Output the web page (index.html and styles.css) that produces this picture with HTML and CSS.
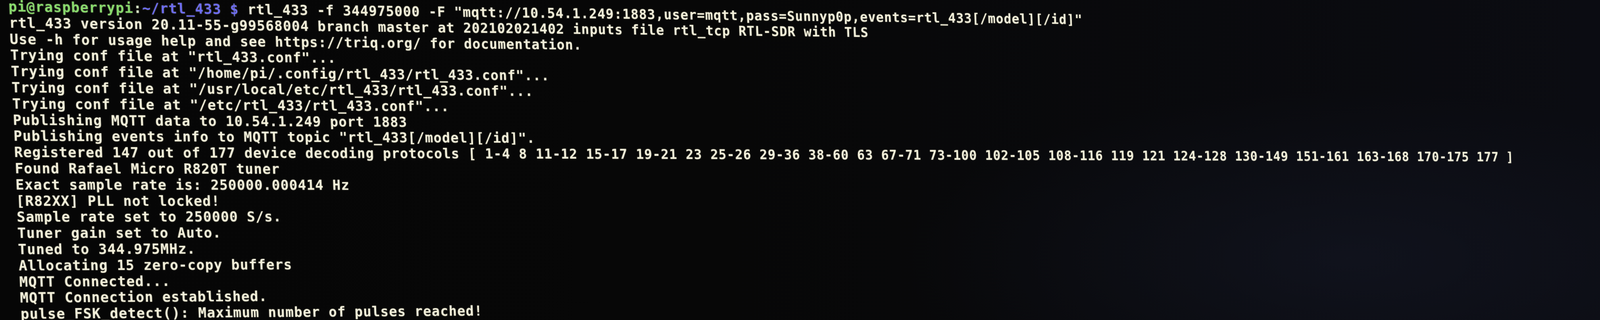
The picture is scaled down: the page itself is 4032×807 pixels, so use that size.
FILE: index.html
```html
<!DOCTYPE html>
<html lang="en">
<head>
<meta charset="utf-8">
<title>rtl_433 terminal</title>
<link rel="stylesheet" href="styles.css">
</head>
<body>
<main class="screen">
  <div class="term">
    <div class="line"><span class="user">pi@raspberrypi</span><span class="colon">:</span><span class="path">~/rtl_433 $</span> rtl_433 -f 344975000 -F "mqtt://10.54.1.249:1883,user=mqtt,pass=Sunnyp0p,events=rtl_433[/model][/id]"</div>
    <div class="line">rtl_433 version 20.11-55-g99568004 branch master at 202102021402 inputs file rtl_tcp RTL-SDR with TLS</div>
    <div class="line">Use -h for usage help and see https://triq.org/ for documentation.</div>
    <div class="line">Trying conf file at "rtl_433.conf"...</div>
    <div class="line">Trying conf file at "/home/pi/.config/rtl_433/rtl_433.conf"...</div>
    <div class="line">Trying conf file at "/usr/local/etc/rtl_433/rtl_433.conf"...</div>
    <div class="line">Trying conf file at "/etc/rtl_433/rtl_433.conf"...</div>
    <div class="line">Publishing MQTT data to 10.54.1.249 port 1883</div>
    <div class="line">Publishing events info to MQTT topic "rtl_433[/model][/id]".</div>
    <div class="line">Registered 147 out of 177 device decoding protocols [ 1-4 8 11-12 15-17 19-21 23 25-26 29-36 38-60 63 67-71 73-100 102-105 108-116 119 121 124-128 130-149 151-161 163-168 170-175 177 ]</div>
    <div class="line">Found Rafael Micro R820T tuner</div>
    <div class="line">Exact sample rate is: 250000.000414 Hz</div>
    <div class="line">[R82XX] PLL not locked!</div>
    <div class="line">Sample rate set to 250000 S/s.</div>
    <div class="line">Tuner gain set to Auto.</div>
    <div class="line">Tuned to 344.975MHz.</div>
    <div class="line">Allocating 15 zero-copy buffers</div>
    <div class="line">MQTT Connected...</div>
    <div class="line">MQTT Connection established.</div>
    <div class="line">pulse_FSK_detect(): Maximum number of pulses reached!</div>
  </div>
</main>
</body>
</html>
```

FILE: styles.css
```css
html, body {
  margin: 0;
  padding: 0;
  height: 100%;
  overflow: hidden;
}

body {
  background: #060606;
}

.screen {
  width: 4032px;
  height: 807px;
  background:
    radial-gradient(ellipse 1600px 600px at 3400px 650px, rgba(22, 26, 42, 0.5), rgba(0, 0, 0, 0) 70%),
    linear-gradient(90deg, #060606 0%, #070707 45%, #0b0c12 100%);
  overflow: hidden;
}

.term {
  margin-top: -3px;
  padding-left: 41px;
  font-family: "DejaVu Sans Mono", "Liberation Mono", monospace;
  font-weight: bold;
  font-size: 36px;
  letter-spacing: 1.3px;
  line-height: 40.8px;
  color: #f3f0da;
  text-shadow: 0 0 3px rgba(255, 250, 215, 0.35);
  transform-origin: 41px 518px;
  transform: perspective(7200px) rotateY(10deg) skewX(2.3deg);
}

.line {
  white-space: pre;
}

.user {
  color: #88da6c;
}

.colon {
  color: #d6e6c6;
}

.path {
  color: #6d6df2;
}
```
